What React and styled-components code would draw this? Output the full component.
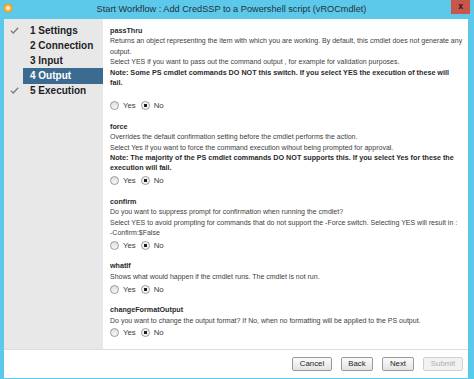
import styled, { createGlobalStyle } from "styled-components";

const GlobalStyle = createGlobalStyle`
  html, body {
    margin: 0;
    padding: 0;
    background: #5cc9ea;
  }
  * {
    box-sizing: border-box;
  }
`;

const steps = [
  { num: 1, label: "Settings", done: true },
  { num: 2, label: "Connection" },
  { num: 3, label: "Input" },
  { num: 4, label: "Output", active: true },
  { num: 5, label: "Execution", done: true },
];

const params = [
  {
    name: "passThru",
    lines: [
      { text: "Returns an object representing the item with which you are working. By default, this cmdlet does not generate any" },
      { text: "output." },
      { text: "Select YES if you want to pass out the command output , for example for validation purposes." },
      { text: "Note: Some PS cmdlet commands DO NOT this switch. If you select YES the execution of these will", bold: true },
      { text: "fail.", bold: true },
      { text: "" },
    ],
  },
  {
    name: "force",
    lines: [
      { text: "Overrides the default confirmation setting before the cmdlet performs the action." },
      { text: "Select Yes if you want to force the command execution wihout being prompted for approval." },
      { text: "Note: The majority of the PS cmdlet commands DO NOT supports this. If you select Yes for these the", bold: true },
      { text: "execution will fail.", bold: true },
    ],
  },
  {
    name: "confirm",
    lines: [
      { text: "Do you want to suppress prompt for confirmation when running the cmdlet?" },
      { text: "Select YES to avoid prompting for commands that do not support the -Force switch. Selecting YES will result in :" },
      { text: "-Confirm:$False" },
    ],
  },
  {
    name: "whatIf",
    lines: [{ text: "Shows what would happen if the cmdlet runs. The cmdlet is not run." }],
  },
  {
    name: "changeFormatOutput",
    lines: [
      { text: "Do you want to change the output format? If No, when no formatting will be applied to the PS output." },
    ],
  },
];

const CheckMark = () => (
  <svg width="9" height="7" viewBox="0 0 9 7">
    <polyline points="0.8,3.6 3.2,6 8.2,0.8" fill="none" stroke="#7a7a7a" strokeWidth="1.3" />
  </svg>
);

const AppIcon = () => (
  <svg width="10" height="10" viewBox="0 0 10 10">
    <circle cx="5" cy="5" r="3.6" fill="#fbe3a8" stroke="#eea21e" strokeWidth="2" />
  </svg>
);

const App = () => {
  return (
    <>
      <GlobalStyle />
      <Window>
        <TitleBar>
          <IconSlot>
            <AppIcon />
          </IconSlot>
          <Title>Start Workflow : Add CredSSP to a Powershell script (vROCmdlet)</Title>
          <CloseButton>x</CloseButton>
        </TitleBar>
        <Body>
          <Main>
            <Nav>
              {steps.map((s) => (
                <NavItem key={s.num}>
                  <CheckSlot>{s.done && <CheckMark />}</CheckSlot>
                  <NavLabel $active={s.active}>
                    {s.num} {s.label}
                  </NavLabel>
                </NavItem>
              ))}
            </Nav>
            <Content>
              {params.map((p) => (
                <Section key={p.name}>
                  <ParamName>{p.name}</ParamName>
                  {p.lines.map((l, i) => (
                    <Line key={i} $bold={l.bold}>
                      {l.text}
                    </Line>
                  ))}
                  <RadioRow>
                    <RadioOption>
                      <Radio />
                      Yes
                    </RadioOption>
                    <RadioOption>
                      <Radio $checked />
                      No
                    </RadioOption>
                  </RadioRow>
                </Section>
              ))}
            </Content>
          </Main>
          <Footer>
            <Button>Cancel</Button>
            <Button $narrow>Back</Button>
            <Button $narrow>Next</Button>
            <Button disabled>Submit</Button>
          </Footer>
        </Body>
      </Window>
    </>
  );
};

export default App;

const Window = styled.div`
  width: 474px;
  height: 379px;
  background: #5cc9ea;
  display: flex;
  flex-direction: column;
  font-family: "Liberation Sans", Arial, sans-serif;
`;

const TitleBar = styled.div`
  height: 19px;
  display: flex;
  align-items: flex-start;
`;

const IconSlot = styled.div`
  width: 16px;
  padding: 3px 0 0 3px;
  display: flex;
`;

const Title = styled.div`
  flex: 1;
  text-align: center;
  font-size: 9.2px;
  line-height: 19px;
  color: #23323c;
  padding-right: 4px;
`;

const CloseButton = styled.div`
  width: 19px;
  height: 14px;
  margin-right: 4px;
  background: #c9564b;
  color: #1a1a1a;
  font-weight: 700;
  font-size: 8.5px;
  line-height: 12px;
  text-align: center;
`;

const Body = styled.div`
  flex: 1;
  margin: 0 6px 5px 4px;
  background: #fff;
  display: flex;
  flex-direction: column;
`;

const Main = styled.div`
  flex: 1;
  display: flex;
  min-height: 0;
`;

const Nav = styled.div`
  width: 99px;
  background: #e8e8e8;
  padding-top: 4px;
  display: flex;
  flex-direction: column;
`;

const NavItem = styled.div`
  height: 15px;
  display: flex;
  align-items: center;
`;

const CheckSlot = styled.div`
  width: 19px;
  padding-left: 6px;
  display: flex;
  align-items: center;
`;

const NavLabel = styled.div`
  flex: 1;
  height: 16px;
  line-height: 16px;
  padding-left: 7px;
  font-size: 10px;
  font-weight: 700;
  white-space: nowrap;
  color: ${(p) => (p.$active ? "#fff" : "#1e1e1e")};
  background: ${(p) => (p.$active ? "#3c6b91" : "transparent")};
`;

const Content = styled.div`
  flex: 1;
  padding: 7px 0 0 7px;
  overflow: hidden;
  color: #3a3a3a;
`;

const Section = styled.div`
  margin-bottom: 9px;
`;

const ParamName = styled.div`
  font-size: 7.2px;
  font-weight: 700;
  line-height: 10.4px;
  color: #2a2a2a;
  white-space: nowrap;
`;

const Line = styled.div`
  font-size: ${(p) => (p.$bold ? "7.2px" : "7px")};
  line-height: 10.4px;
  height: 10.4px;
  white-space: nowrap;
  font-weight: ${(p) => (p.$bold ? 700 : 400)};
  color: ${(p) => (p.$bold ? "#2a2a2a" : "#404040")};
`;

const RadioRow = styled.div`
  height: 14px;
  display: flex;
  align-items: center;
  gap: 5px;
`;

const RadioOption = styled.label`
  display: flex;
  align-items: center;
  gap: 4px;
  font-size: 7.8px;
  color: #3a3a3a;
`;

const Radio = styled.span`
  width: 9px;
  height: 9px;
  border-radius: 50%;
  border: 1px solid #9a9a9a;
  background: ${(p) =>
    p.$checked
      ? "radial-gradient(circle, #1e1e1e 0 1.6px, #f4f4f4 2px)"
      : "linear-gradient(#dedede, #f8f8f8)"};
`;

const Footer = styled.div`
  height: 29px;
  border-top: 1px solid #dedede;
  display: flex;
  align-items: center;
  justify-content: flex-end;
  gap: 9px;
  padding-right: 5px;
`;

const Button = styled.button`
  width: ${(p) => (p.$narrow ? "32px" : "40px")};
  height: 14px;
  padding: 0;
  font-family: "Liberation Sans", Arial, sans-serif;
  font-size: 7.8px;
  border-radius: 2px;
  border: 1px solid ${(p) => (p.disabled ? "#cfcfcf" : "#9a9a9a")};
  color: ${(p) => (p.disabled ? "#adadad" : "#222")};
  background: ${(p) => (p.disabled ? "#f2f2f2" : "linear-gradient(#fbfbfb, #e3e3e3)")};
`;
